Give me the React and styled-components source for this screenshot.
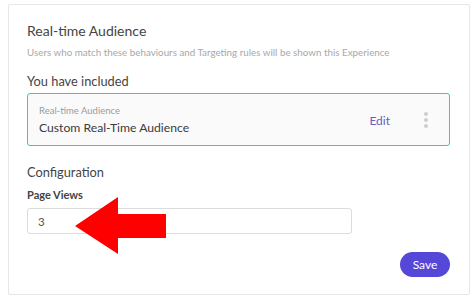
import React from "react";
import styled, { createGlobalStyle } from "styled-components";

const Global = createGlobalStyle`
  html, body { margin: 0; padding: 0; background: #fff; }
  body { font-family: Lato, "Noto Sans", sans-serif; color: #444; }
`;

const Page = styled.div`
  padding: 4px 4px 3px 8px;
`;

const Card = styled.div`
  position: relative;
  border: 1px solid #e6e6e6;
  border-radius: 2px;
  padding: 16px 19px 16px 18px;
  height: 291px;
  box-sizing: border-box;
  display: flex;
  flex-direction: column;
`;

const Title = styled.h2`
  margin: 0;
  font-size: 14px;
  font-weight: 400;
  color: #444;
  line-height: 20px;
`;

const Sub = styled.p`
  margin: 4px 0 0;
  font-size: 9.8px;
  color: #a8a8a8;
  line-height: 14px;
`;

const Heading = styled.h3`
  margin: ${(p) => p.$top}px 0 0;
  font-size: 12.8px;
  font-weight: 400;
  color: #444;
  line-height: 20px;
`;

const Included = styled.div`
  margin-top: 2px;
  height: 53px;
  box-sizing: border-box;
  border: 1px solid #4fc1b4;
  border-radius: 3px;
  background: #fafafa;
  display: flex;
  align-items: center;
  padding: 0 21px 0 11px;
`;

const IncludedText = styled.div`
  flex: 1;
  display: flex;
  flex-direction: column;
  padding-top: 3px;
`;

const Small = styled.span`
  font-size: 9.5px;
  color: #9a9a9a;
  line-height: 14px;
`;

const Value = styled.span`
  font-size: 12.2px;
  color: #3a3a3a;
  line-height: 20px;
`;

const Edit = styled.span`
  font-size: 12px;
  color: #6a5bc4;
  margin-right: 34px;
  padding-top: 1px;
`;

const Kebab = styled.div`
  display: flex;
  flex-direction: column;
  gap: 2px;
  span {
    width: 4px;
    height: 4px;
    border-radius: 50%;
    background: #cdcdcd;
  }
`;

const Label = styled.label`
  margin-top: 5px;
  font-size: 11px;
  font-weight: 700;
  color: #444;
  line-height: 16px;
`;

const Input = styled.div`
  margin-top: 5px;
  width: 325px;
  height: 26px;
  box-sizing: border-box;
  border: 1px solid #dcdcdc;
  border-radius: 3px;
  padding: 0 10px;
  display: flex;
  align-items: center;
  font-size: 11.5px;
  color: #555;
`;

const Footer = styled.div`
  display: flex;
  justify-content: flex-end;
  margin-top: 18px;
`;

const Save = styled.button`
  width: 50px;
  height: 25px;
  border: none;
  border-radius: 13px;
  background: #5547d8;
  color: #fff;
  font-family: inherit;
  font-size: 12px;
  padding: 0;
`;

const Arrow = styled.svg`
  position: absolute;
  left: 66px;
  top: 192px;
`;

export default function App() {
  return (
    <>
      <Global />
      <Page>
        <Card>
          <Title>Real-time Audience</Title>
          <Sub>Users who match these behaviours and Targeting rules will be shown this Experience</Sub>
          <Heading $top={12}>You have included</Heading>
          <Included>
            <IncludedText>
              <Small>Real-time Audience</Small>
              <Value>Custom Real-Time Audience</Value>
            </IncludedText>
            <Edit>Edit</Edit>
            <Kebab>
              <span />
              <span />
              <span />
            </Kebab>
          </Included>
          <Heading $top={16}>Configuration</Heading>
          <Label>Page Views</Label>
          <Input>3</Input>
          <Footer>
            <Save>Save</Save>
          </Footer>
          <Arrow width="100" height="60" viewBox="0 0 100 60">
            <polygon points="0,29 43,0 43,17 91,17 91,41 43,41 43,57" fill="#ff0000" />
          </Arrow>
        </Card>
      </Page>
    </>
  );
}
